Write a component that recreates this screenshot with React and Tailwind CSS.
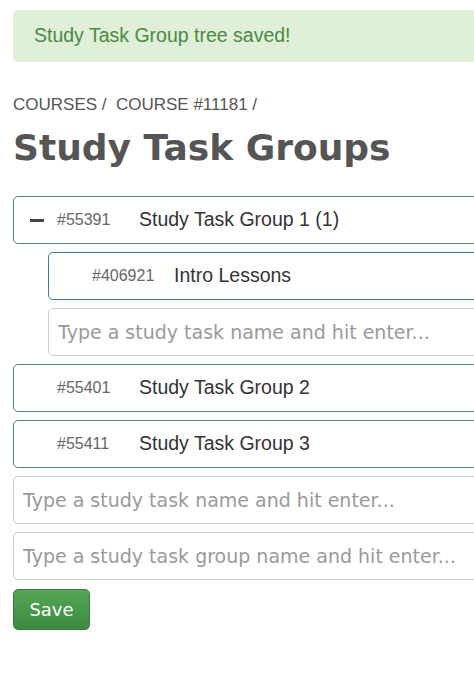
import { useState } from 'react'

const groups = [
  { id: 55391, name: 'Study Task Group 1 (1)', open: true, tasks: [{ id: 406921, name: 'Intro Lessons' }] },
  { id: 55401, name: 'Study Task Group 2', open: false, tasks: [] },
  { id: 55411, name: 'Study Task Group 3', open: false, tasks: [] },
]

const sans = { fontFamily: '"Liberation Sans", Arial, sans-serif' }
const lucida = { fontFamily: '"DejaVu Sans", Verdana, sans-serif' }

function Row({ item, task, open }) {
  return (
    <div
      className={`h-12 flex items-center rounded-[5px] border bg-white ${task ? 'border-[#3f7d8c]' : 'border-[#4a8a68]'}`}
    >
      <div className="w-[43px] shrink-0 flex justify-center pl-[3px]">
        {open && <div className="w-[14px] h-[3px] bg-[#444]" />}
      </div>
      <div className="w-[82px] shrink-0 text-[16px] text-[#666]">#{item.id}</div>
      <div className="text-[19.5px] text-[#333]">{item.name}</div>
    </div>
  )
}

function NameInput({ placeholder }) {
  const [value, setValue] = useState('')
  return (
    <input
      type="text"
      value={value}
      onChange={(e) => setValue(e.target.value)}
      placeholder={placeholder}
      style={lucida}
      className="h-12 w-full rounded-[5px] border border-[#cccccc] bg-white px-[9px] text-[19px] text-[#333] placeholder-[#9a9a9a] focus:outline-none"
    />
  )
}

export default function App() {
  return (
    <div className="min-h-screen bg-white overflow-hidden" style={sans}>
      <div className="w-[540px] pl-[13px] pt-[10px]">
        {/* Alert */}
        <div className="h-[52px] flex items-center rounded-[5px] bg-[#dfefd8] pl-[21px] text-[19.5px] text-[#4b8a45]">
          Study Task Group tree saved!
        </div>

        {/* Breadcrumb */}
        <div className="mt-[34px] text-[17px] leading-[18px] text-[#555] uppercase">
          Courses /&nbsp; Course #11181 /
        </div>

        <h1 className="mt-[12px] text-[36px] leading-[44px] font-bold text-[#555]" style={lucida}>
          Study Task Groups
        </h1>

        {/* Tree */}
        <div className="mt-[26px] flex flex-col gap-2">
          {groups.map((g) => (
            <div key={g.id} className="flex flex-col gap-2">
              <Row item={g} open={g.open} />
              {g.open && (
                <div className="pl-[35px] flex flex-col gap-2">
                  {g.tasks.map((t) => (
                    <Row key={t.id} item={t} task />
                  ))}
                  <NameInput placeholder="Type a study task name and hit enter..." />
                </div>
              )}
            </div>
          ))}
          <NameInput placeholder="Type a study task name and hit enter..." />
          <NameInput placeholder="Type a study task group name and hit enter..." />
        </div>

        <button
          className="mt-[9px] h-[41px] w-[77px] rounded-[5px] border border-[#3a7a3d] bg-gradient-to-b from-[#55a657] to-[#3e8a42] text-[18px] text-white"
          style={lucida}
        >
          Save
        </button>
      </div>
    </div>
  )
}
